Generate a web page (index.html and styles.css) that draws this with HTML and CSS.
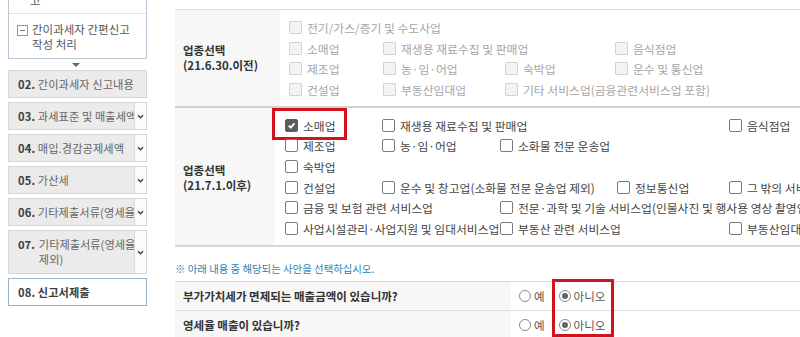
FILE: index.html
```html
<!DOCTYPE html>
<html>
<head>
    <meta charset="UTF-8">
    <meta name="viewport" content="width=device-width, initial-scale=1.0">
    <title>간이과세자 간편신고</title>
    <link rel="stylesheet" href="styles.css">
</head>
<body>
    <div class="page">
        <div class="sidebar">
            <div class="side-box">
                <div class="side-sub first"><span class="sub-text">고</span></div>
                <div class="side-sub">
                    <span class="minus"></span>
                    <span class="sub-text">간이과세자 간편신고<br>작성 처리</span>
                </div>
            </div>
            <div class="side-arrow"></div>

            <div class="step"><div class="step-label"><b>02.</b> 간이과세자 신고내용</div></div>
            <div class="step has-more"><div class="step-label"><b>03.</b> 과세표준 및 매출세액</div><div class="more"><svg viewBox="0 0 8 6"><polyline points="1,1.5 4,4.5 7,1.5"/></svg></div></div>
            <div class="step has-more"><div class="step-label"><b>04.</b> 매입.경감공제세액</div><div class="more"><svg viewBox="0 0 8 6"><polyline points="1,1.5 4,4.5 7,1.5"/></svg></div></div>
            <div class="step has-more"><div class="step-label"><b>05.</b> 가산세</div><div class="more"><svg viewBox="0 0 8 6"><polyline points="1,1.5 4,4.5 7,1.5"/></svg></div></div>
            <div class="step has-more"><div class="step-label"><b>06.</b> 기타제출서류(영세율 적용)</div><div class="more"><svg viewBox="0 0 8 6"><polyline points="1,1.5 4,4.5 7,1.5"/></svg></div></div>
            <div class="step has-more tall"><div class="step-label"><b>07.</b> <span class="wrap">기타제출서류(영세율<br>제외)</span></div><div class="more"><svg viewBox="0 0 8 6"><polyline points="1,1.5 4,4.5 7,1.5"/></svg></div></div>
            <div class="step current"><div class="step-label"><b>08.</b> <b>신고서제출</b></div></div>
        </div>

        <div class="main">
            <div class="form-row old">
                <div class="form-head">업종선택<br>(21.6.30.이전)</div>
                <div class="form-body">
                    <div class="opts opts-old">
                        <label class="opt span4"><span class="cb off"></span>전기/가스/증기 및 수도사업</label>
                        <label class="opt c1"><span class="cb off"></span>소매업</label>
                        <label class="opt span2"><span class="cb off"></span>재생용 재료수집 및 판매업</label>
                        <label class="opt c4"><span class="cb off"></span>음식점업</label>
                        <label class="opt c1"><span class="cb off"></span>제조업</label>
                        <label class="opt"><span class="cb off"></span>농·임·어업</label>
                        <label class="opt"><span class="cb off"></span>숙박업</label>
                        <label class="opt"><span class="cb off"></span>운수 및 통신업</label>
                        <label class="opt c1"><span class="cb off"></span>건설업</label>
                        <label class="opt"><span class="cb off"></span>부동산임대업</label>
                        <label class="opt span2"><span class="cb off"></span>기타 서비스업(금융관련서비스업 포함)</label>
                    </div>
                </div>
            </div>

            <div class="form-row new">
                <div class="form-head">업종선택<br>(21.7.1.이후)</div>
                <div class="form-body">
                    <div class="opts opts-new">
                        <label class="opt c1 picked"><span class="cb on"><svg viewBox="0 0 12 12"><polyline points="3,6.2 5.2,8.4 9.2,3.6"/></svg></span>소매업<span class="mark mark-check"></span></label>
                        <label class="opt span3"><span class="cb"></span>재생용 재료수집 및 판매업</label>
                        <label class="opt c5"><span class="cb"></span>음식점업</label>
                        <label class="opt c1"><span class="cb"></span>제조업</label>
                        <label class="opt"><span class="cb"></span>농·임·어업</label>
                        <label class="opt span2"><span class="cb"></span>소화물 전문 운송업</label>
                        <label class="opt c1 alone"><span class="cb"></span>숙박업</label>
                        <label class="opt c1"><span class="cb"></span>건설업</label>
                        <label class="opt span2"><span class="cb"></span>운수 및 창고업(소화물 전문 운송업 제외)</label>
                        <label class="opt c4"><span class="cb"></span>정보통신업</label>
                        <label class="opt c5"><span class="cb"></span>그 밖의 서비스업</label>
                        <label class="opt c1 span2"><span class="cb"></span>금융 및 보험 관련 서비스업</label>
                        <label class="opt span3"><span class="cb"></span>전문·과학 및 기술 서비스업(인물사진 및 행사용 영상 촬영업 제외)</label>
                        <label class="opt c1 span2"><span class="cb"></span>사업시설관리·사업지원 및 임대서비스업</label>
                        <label class="opt span2"><span class="cb"></span>부동산 관련 서비스업</label>
                        <label class="opt c5"><span class="cb"></span>부동산임대업</label>
                    </div>
                </div>
            </div>

            <p class="notice">※ 아래 내용 중 해당되는 사안을 선택하십시오.</p>

            <div class="questions">
                <div class="q-row">
                    <div class="q-head">부가가치세가 면제되는 매출금액이 있습니까?</div>
                    <div class="q-body">
                        <label class="radio"><span class="rd"></span>예</label>
                        <label class="radio"><span class="rd on"></span>아니오</label>
                    </div>
                </div>
                <div class="q-row">
                    <div class="q-head">영세율 매출이 있습니까?</div>
                    <div class="q-body">
                        <label class="radio"><span class="rd"></span>예</label>
                        <label class="radio"><span class="rd on"></span>아니오</label>
                    </div>
                </div>
                <span class="mark mark-radio"></span>
            </div>
        </div>
    </div>
</body>
</html>
```

FILE: styles.css
```css
body {
    margin: 0;
    font-family: "Noto Sans CJK KR", "Noto Sans", sans-serif;
    background-color: #ffffff;
    color: #444;
    overflow: hidden;
}

.page {
    display: flex;
    align-items: flex-start;
    width: 800px;
    height: 337px;
    overflow: hidden;
}

/* Sidebar */
.sidebar {
    flex-shrink: 0;
    width: 139px;
    margin-left: 8px;
    margin-top: -12px;
    font-size: 11.2px;
}

.side-box {
    background-color: #fff;
    border: 1px solid #b9c6d4;
}

.side-sub {
    display: flex;
    align-items: flex-start;
    padding: 8px 4px 6px 8px;
    line-height: 15px;
    font-size: 11.5px;
    color: #555;
}

.side-sub.first {
    padding: 4px 4px 6px 21px;
    line-height: 14px;
    border-bottom: 1px solid #e4e4e4;
}

.minus {
    flex-shrink: 0;
    width: 9px;
    height: 9px;
    margin: 3px 4px 0 0;
    border: 1px solid #8c9aab;
    position: relative;
}

.minus::after {
    content: "";
    position: absolute;
    left: 2px;
    right: 2px;
    top: 4px;
    height: 1px;
    background-color: #6d7a89;
}

.side-arrow {
    height: 11px;
    display: flex;
    justify-content: center;
    align-items: center;
}

.side-arrow::before {
    content: "";
    border-left: 4px solid transparent;
    border-right: 4px solid transparent;
    border-top: 4px solid #666;
    margin-right: 4px;
}

.step {
    display: flex;
    height: 28px;
    box-sizing: border-box;
    margin-bottom: 4px;
    background-color: #ebebeb;
    border: 1px solid #d7d7d7;
}

.step-label {
    flex: 1;
    min-width: 0;
    padding: 6px 0 6px 9px;
    line-height: 14px;
    letter-spacing: 0.1px;
    white-space: nowrap;
    overflow: hidden;
    color: #666;
}

.step-label b {
    color: #3c3c3c;
}

.step .wrap {
    display: inline-block;
    vertical-align: top;
}

.step.tall {
    height: 44px;
}

.step.tall .step-label {
    display: flex;
    gap: 4px;
    line-height: 15px;
    letter-spacing: 0;
}

.more {
    width: 11px;
    flex-shrink: 0;
    background-color: #fbfbfb;
    border-left: 1px solid #dcdcdc;
    display: flex;
    align-items: center;
    justify-content: center;
}

.more svg {
    width: 7px;
    height: 5px;
    fill: none;
    stroke: #444;
    stroke-width: 1.8;
}

.step.current {
    background-color: #fff;
    border-color: #9fb3c7;
}

.step.current .step-label {
    color: #222;
}

/* Main */
.main {
    flex-shrink: 0;
    width: 720px;
    margin-left: 28px;
    margin-top: 9px;
    font-size: 11.5px;
}

.form-row {
    display: flex;
    border-top: 1px solid #dedede;
}

.form-row.new {
    border-top: 2px solid #d2d2d2;
    border-bottom: 2px solid #d8d8d8;
}

.form-head {
    display: flex;
    align-items: center;
    flex-shrink: 0;
    width: 97px;
    padding-left: 8px;
    background-color: #f7f7f7;
    font-weight: bold;
    line-height: 15px;
    color: #333;
}

.form-row.new .form-head {
    width: 92px;
    padding-top: 3px;
}

.form-body {
    flex: 1;
    padding: 7px 0 6px 9px;
}

.form-row.new .form-body {
    padding: 7px 0 6px 10px;
}

.opts {
    display: grid;
    grid-auto-rows: 20.7px;
}

.opts-old {
    grid-template-columns: 94px 122px 110px 150px;
}

.opts-new {
    grid-template-columns: 97px 118px 117px 112px 150px;
}

.opt {
    display: flex;
    align-items: center;
    white-space: nowrap;
    font-size: 11.8px;
    color: #444;
    position: relative;
}

.opts-old .opt {
    color: #a5a5a5;
}

.c1 { grid-column-start: 1; }
.c4 { grid-column-start: 4; }
.c5 { grid-column-start: 5; }
.span2 { grid-column-end: span 2; }
.span3 { grid-column-end: span 3; }
.span4 { grid-column: 1 / span 4; }
.alone { grid-column-end: span 5; }

.cb {
    flex-shrink: 0;
    width: 11px;
    height: 11px;
    margin-right: 5px;
    border: 1px solid #7a7a7a;
    border-radius: 2px;
    background-color: #fff;
    display: flex;
}

.cb.off {
    border-color: #d3d3d3;
    background-color: #f3f3f3;
    border-radius: 1px;
}

.cb.on {
    background-color: #5c5c5c;
    border-color: #5c5c5c;
}

.cb.on svg {
    width: 11px;
    height: 11px;
    fill: none;
    stroke: #fff;
    stroke-width: 2;
}

/* red highlight boxes */
.mark {
    position: absolute;
    border: 3px solid #d3131c;
    box-sizing: border-box;
    pointer-events: none;
}

.mark-check {
    left: -13px;
    top: -7px;
    width: 75px;
    height: 32px;
}

.notice {
    margin: 15px 0 6px 0;
    font-size: 10.4px;
    line-height: 13px;
    color: #2f7fb0;
}

.questions {
    position: relative;
    border-top: 1px solid #d8d8d8;
}

.q-row {
    display: flex;
    height: 28px;
    border-bottom: 1px solid #e0e0e0;
}

.q-head {
    display: flex;
    align-items: center;
    flex-shrink: 0;
    width: 328px;
    padding-left: 8px;
    background-color: #f7f7f7;
    font-weight: bold;
    color: #333;
}

.q-body {
    display: flex;
    align-items: center;
    gap: 14px;
    padding-left: 8px;
}

.radio {
    display: flex;
    align-items: center;
    font-size: 11.5px;
    color: #555;
}

.rd {
    width: 10px;
    height: 10px;
    margin-right: 3px;
    border: 1px solid #8a8a8a;
    border-radius: 50%;
    display: flex;
    align-items: center;
    justify-content: center;
}

.rd.on::after {
    content: "";
    width: 6px;
    height: 6px;
    border-radius: 50%;
    background-color: #666;
}

.mark-radio {
    left: 377px;
    top: -3px;
    width: 62px;
    height: 58px;
}
```
